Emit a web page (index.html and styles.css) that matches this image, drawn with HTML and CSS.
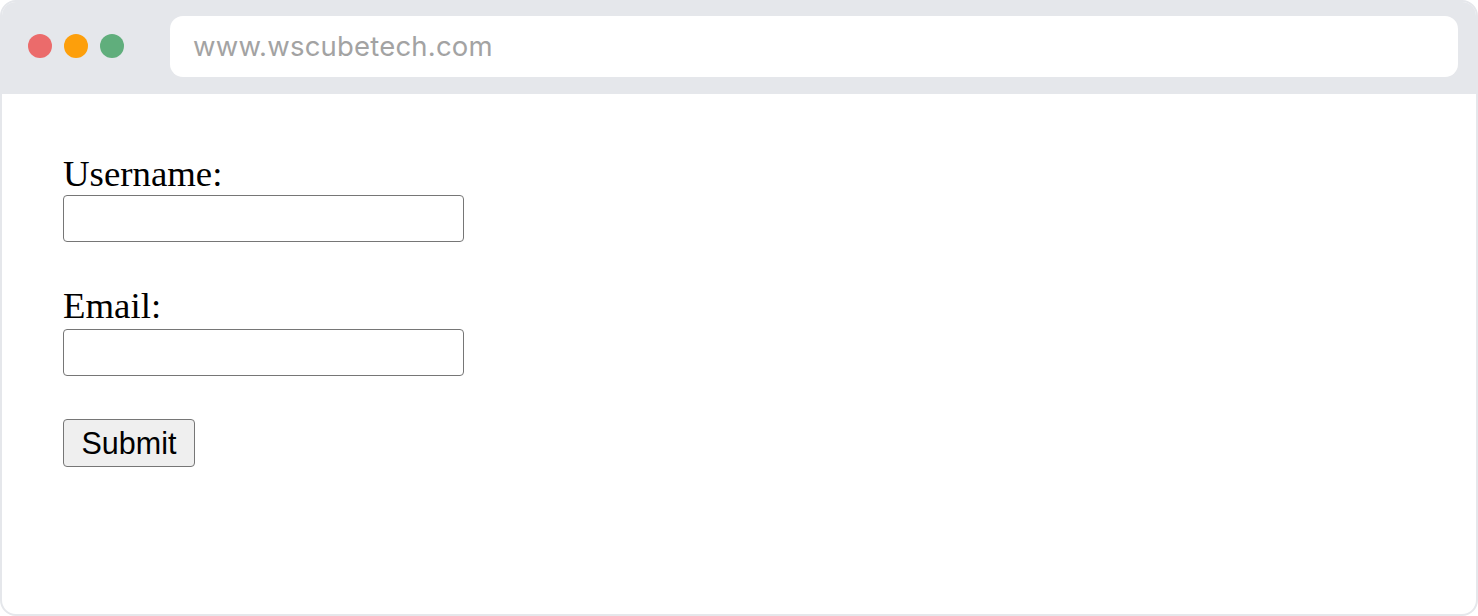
FILE: index.html
```html
<!DOCTYPE html>
<html>
<head>
<meta charset="utf-8">
<link rel="stylesheet" href="styles.css">
</head>
<body>
<div class="window">
  <div class="topbar">
    <div class="dots">
      <span class="dot red"></span>
      <span class="dot yellow"></span>
      <span class="dot green"></span>
    </div>
    <div class="url">www.wscubetech.com</div>
  </div>
  <div class="content">
    <form class="form">
      <label class="label" for="username">Username:</label>
      <input class="field" type="text" id="username">
      <label class="label gap" for="email">Email:</label>
      <input class="field lower" type="email" id="email">
      <button class="submit" type="button">Submit</button>
    </form>
  </div>
</div>
</body>
</html>
```
FILE: styles.css
```css
* { box-sizing: border-box; }
html, body { margin: 0; padding: 0; background: #ffffff; }
.window {
  width: 1478px;
  height: 616px;
  border: 2px solid #e5e7eb;
  border-radius: 16px;
  overflow: hidden;
  background: #ffffff;
  display: flex;
  flex-direction: column;
}
.topbar {
  height: 92px;
  background: #e5e7eb;
  display: flex;
  align-items: center;
  padding: 0 18px 4px 26px;
  flex-shrink: 0;
}
.dots { display: flex; gap: 12px; }
.dot { width: 24px; height: 24px; border-radius: 50%; display: block; }
.red { background: #eb6b6b; }
.yellow { background: #fd9f0b; }
.green { background: #60ae7c; }
.url {
  margin-left: 46px;
  flex: 1;
  height: 61px;
  background: #ffffff;
  border-radius: 13px;
  display: flex;
  align-items: center;
  padding-left: 23px;
  font-family: Inter, "Noto Sans", sans-serif;
  font-size: 27.5px;
  color: #a3a3a3;
  letter-spacing: 0.2px;
}
.content { padding: 59px 0 0 61px; }
.form { display: flex; flex-direction: column; align-items: flex-start; }
.label {
  font-family: "Liberation Serif", "Times New Roman", serif;
  font-size: 36.8px;
  line-height: 41px;
  color: #000;
}
.label.gap { margin-top: 43px; }
.field {
  margin-top: 1px;
  width: 401px;
  height: 47px;
  border: 1px solid #767676;
  border-radius: 4px;
  background: #fff;
  padding: 0;
}
.field.lower { margin-top: 3px; }
.submit {
  margin-top: 43px;
  width: 132px;
  height: 48px;
  border: 1px solid #767676;
  border-radius: 4px;
  background: #efefef;
  font-family: "Liberation Sans", Arial, sans-serif;
  font-size: 30.5px;
  color: #000;
  padding: 0;
}
```
